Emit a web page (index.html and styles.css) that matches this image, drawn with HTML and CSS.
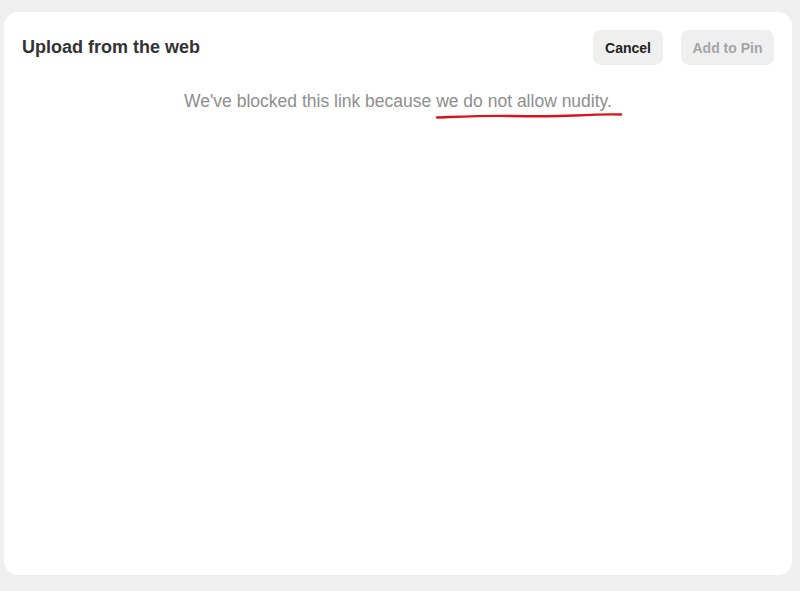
FILE: index.html
```html
<!DOCTYPE html>
<html lang="en">
<head>
  <meta charset="UTF-8">
  <title>Upload from the web</title>
  <link rel="stylesheet" href="styles.css">
</head>
<body>

<div class="card">
  <div class="header">
    <h1 class="title">Upload from the web</h1>
    <div class="actions">
      <button class="btn btn-cancel">Cancel</button>
      <button class="btn btn-add">Add to Pin</button>
    </div>
  </div>
  <p class="message">We've blocked this link because <span class="marked">we do not allow nudity.<svg class="scribble" viewBox="0 0 190 8" width="190" height="8"><path d="M2 5.5 C 30 4.5, 50 3.5, 75 4 S 120 4.5, 140 3.5 S 175 2, 186 2.5" fill="none" stroke="#d9141a" stroke-width="2.4" stroke-linecap="round"/></svg></span></p>
</div>

</body>
</html>
```

FILE: styles.css
```css
html, body {
  margin: 0;
  padding: 0;
  background: #efefef;
}
body {
  padding: 12px 8px 16px 4px;
  font-family: "Liberation Sans", Arial, sans-serif;
}
.card {
  background: #fff;
  border-radius: 14px;
  height: 563px;
  box-sizing: border-box;
}
.header {
  display: flex;
  align-items: center;
  justify-content: space-between;
  padding: 18px 18px 0 18px;
}
.title {
  margin: 0;
  font-size: 18px;
  font-weight: bold;
  color: #333;
}
.actions {
  display: flex;
  gap: 18px;
}
.btn {
  height: 35px;
  border: none;
  border-radius: 8px;
  background: #efefef;
  font-family: inherit;
  font-size: 14px;
  font-weight: bold;
  padding: 0;
  white-space: nowrap;
}
.btn-cancel {
  color: #222;
  width: 70px;
}
.btn-add {
  color: #a5a5a5;
  width: 93px;
}
.message {
  margin: 26px 0 0 0;
  text-align: center;
  font-size: 17.5px;
  color: #8e8e8e;
}
.marked {
  position: relative;
}
.scribble {
  position: absolute;
  left: -1px;
  top: 21px;
}
```
